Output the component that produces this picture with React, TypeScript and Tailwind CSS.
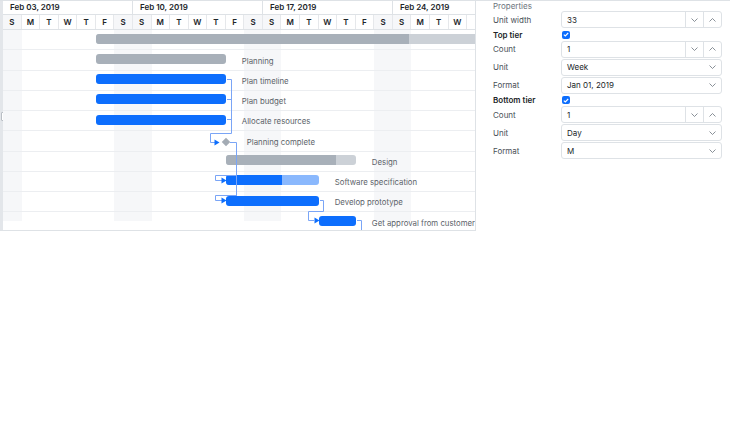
import type { ReactNode } from 'react'

const DAY = 130 / 7
const ROW_H = 20.25
const dayNames = ['S', 'M', 'T', 'W', 'T', 'F', 'S']
const weeks = ['Feb 03, 2019', 'Feb 10, 2019', 'Feb 17, 2019', 'Feb 24, 2019']

type GanttRow =
  | { kind: 'bar'; start: number; span: number; progress: number; tone: 'blue' | 'gray'; label: string }
  | { kind: 'milestone'; start: number; label: string }

const rows: GanttRow[] = [
  { kind: 'bar', start: 5, span: 24, progress: 313 / (24 * DAY), tone: 'gray', label: '' },
  { kind: 'bar', start: 5, span: 7, progress: 1, tone: 'gray', label: 'Planning' },
  { kind: 'bar', start: 5, span: 7, progress: 1, tone: 'blue', label: 'Plan timeline' },
  { kind: 'bar', start: 5, span: 7, progress: 1, tone: 'blue', label: 'Plan budget' },
  { kind: 'bar', start: 5, span: 7, progress: 1, tone: 'blue', label: 'Allocate resources' },
  { kind: 'milestone', start: 12, label: 'Planning complete' },
  { kind: 'bar', start: 12, span: 7, progress: 0.85, tone: 'gray', label: 'Design' },
  { kind: 'bar', start: 12, span: 5, progress: 0.6, tone: 'blue', label: 'Software specification' },
  { kind: 'bar', start: 12, span: 5, progress: 1, tone: 'blue', label: 'Develop prototype' },
  { kind: 'bar', start: 17, span: 2, progress: 1, tone: 'blue', label: 'Get approval from customer' },
]

function TaskBar({ row }: { row: GanttRow }) {
  if (row.kind === 'milestone') {
    const center = row.start * DAY
    return (
      <>
        <div
          className="absolute top-[7.75px] h-[6px] w-[6px] rotate-45 bg-[#a3abb4]"
          style={{ left: center - 3 }}
        />
        <div
          className="absolute bottom-0 top-[3px] flex items-center whitespace-nowrap text-[#5c636a]"
          style={{ left: center + 21 }}
        >
          {row.label}
        </div>
      </>
    )
  }

  const left = row.start * DAY
  const width = row.span * DAY
  const isBlue = row.tone === 'blue'

  return (
    <>
      <div
        className={`absolute top-[3.5px] h-[10px] overflow-hidden rounded-[3px] ${isBlue ? 'bg-[#8ab8fd]' : 'bg-[#ccd1d7]'}`}
        style={{ left, width }}
      >
        <div
          className={`h-full ${isBlue ? 'bg-[#0d6efd]' : 'bg-[#a8b0b9]'}`}
          style={{ width: `${row.progress * 100}%` }}
        />
      </div>
      {row.label ? (
        <div
          className="absolute bottom-0 top-[3px] flex items-center whitespace-nowrap text-[#5c636a]"
          style={{ left: left + width + 16 }}
        >
          {row.label}
        </div>
      ) : null}
    </>
  )
}

function Connectors() {
  return (
    <svg className="pointer-events-none absolute left-0 top-[-1px]" width="476" height="232" viewBox="0 0 476 232">
      <g fill="none" stroke="#7aa5f6" strokeWidth="1">
        <path d="M227 79.5H231.5V133.5H210.5V142.5H215" />
        <path d="M227 99.5H231.5" />
        <path d="M227 119.5H231.5" />
        <path d="M230 142.5H236.5V196" />
        <path d="M236.5 175.5H215.5V180.5H222" />
        <path d="M236.5 195.5H215.5V200.5H222" />
        <path d="M320 200.5H323.5V211.5H308.5V220.5H314" />
        <path d="M357 220.5H361.5V232" />
      </g>
      <g fill="#0d6efd">
        <polygon points="214.5,139.5 219.5,142.5 214.5,145.5" />
        <polygon points="221.5,177.5 226.5,180.5 221.5,183.5" />
        <polygon points="221.5,197.5 226.5,200.5 221.5,203.5" />
        <polygon points="314.5,217.5 319.5,220.5 314.5,223.5" />
      </g>
    </svg>
  )
}

function Gantt() {
  const days = weeks
    .flatMap((_, w) => dayNames.map((d, i) => ({ key: `${w}-${i}`, name: d, weekend: i === 0 || i === 6 })))
    .slice(0, 25)

  return (
    <div className="relative flex h-[231px] w-[476px] shrink-0 overflow-hidden border-b border-r border-t border-[#dee2e6]">
      <div className="relative w-[3px] shrink-0 bg-[#e3e6ea]">
        <div className="absolute left-[1px] top-[111px] h-[9px] w-[3px] rounded-[1px] border border-[#b9bec5] bg-white" />
      </div>
      <div className="relative flex-1 overflow-hidden">
        <div className="w-[530px]">
          <div className="flex h-[14px] border-b border-[#dee2e6]">
            {weeks.map((w) => (
              <div key={w} className="w-[130px] shrink-0 border-r border-[#dee2e6] pl-[7px] text-[8px] font-semibold leading-[13px] text-[#212529]">
                {w}
              </div>
            ))}
          </div>
          <div className="flex h-[15px] border-b border-[#dee2e6]">
            {days.map((d) => (
              <div
                key={d.key}
                className={`flex w-[18.5714px] shrink-0 items-center justify-center border-r border-[#e6e8eb] text-[8px] font-semibold text-[#212529] ${d.weekend ? 'bg-[#f6f7f9]' : ''}`}
              >
                {d.name}
              </div>
            ))}
          </div>
          <div className="relative h-[202px]">
            <div className="absolute inset-x-0 top-0 flex h-[191px]">
              {days.map((d) => (
                <div key={d.key} className={`w-[18.5714px] shrink-0 ${d.weekend ? 'bg-[#f6f7f9]' : ''}`} />
              ))}
            </div>
            {rows.map((row, i) => (
              <div key={i} className="relative border-b border-[#eceef1] text-[7.8px]" style={{ height: ROW_H }}>
                <TaskBar row={row} />
              </div>
            ))}
          </div>
        </div>
      </div>
      <Connectors />
    </div>
  )
}

function Chevron({ up = false }: { up?: boolean }) {
  return (
    <svg width="7" height="4" viewBox="0 0 7 4" fill="none" stroke="#6c757d" strokeWidth="0.8">
      {up ? <polyline points="0.5,3.5 3.5,0.5 6.5,3.5" /> : <polyline points="0.5,0.5 3.5,3.5 6.5,0.5" />}
    </svg>
  )
}

function Field({ label, children }: { label: string; children: ReactNode }) {
  return (
    <div className="flex h-[18px] items-start">
      <div className="flex h-[17px] w-[68px] shrink-0 items-center whitespace-nowrap">{label}</div>
      <div className="flex-1">{children}</div>
    </div>
  )
}

function NumberBox({ value }: { value: string }) {
  return (
    <div className="flex h-[17px] items-stretch rounded-[3px] border border-[#dee2e6] bg-white text-[#212529]">
      <div className="flex flex-1 items-center pl-[5px]">{value}</div>
      <div className="flex w-[18px] items-center justify-center border-l border-[#dee2e6]">
        <Chevron />
      </div>
      <div className="flex w-[18px] items-center justify-center border-l border-[#dee2e6]">
        <Chevron up />
      </div>
    </div>
  )
}

function SelectBox({ value }: { value: string }) {
  return (
    <div className="flex h-[17px] items-center rounded-[3px] border border-[#dee2e6] bg-white pl-[5px] pr-[5px] text-[#212529]">
      <div className="flex-1">{value}</div>
      <Chevron />
    </div>
  )
}

function CheckRow({ label }: { label: string }) {
  return (
    <div className="flex h-[11.5px] items-center">
      <div className="w-[68px] shrink-0 font-semibold text-[#212529]">{label}</div>
      <div className="ml-[1px] flex h-[8px] w-[8px] items-center justify-center rounded-[2px] bg-[#0d6efd]">
        <svg width="6" height="5" viewBox="0 0 6 5" fill="none" stroke="white" strokeWidth="1.1">
          <polyline points="0.8,2.6 2.3,4 5.2,1" />
        </svg>
      </div>
    </div>
  )
}

function PropertiesPanel() {
  return (
    <div className="flex-1 border-t border-[#dee2e6] pl-[17px] pr-[8px] text-[8px] text-[#495057]">
      <div className="h-[10px] pt-px leading-[9px] text-[#6c757d]">Properties</div>
      <Field label="Unit width">
        <NumberBox value="33" />
      </Field>
      <CheckRow label="Top tier" />
      <Field label="Count">
        <NumberBox value="1" />
      </Field>
      <Field label="Unit">
        <SelectBox value="Week" />
      </Field>
      <Field label="Format">
        <SelectBox value="Jan 01, 2019" />
      </Field>
      <CheckRow label="Bottom tier" />
      <Field label="Count">
        <NumberBox value="1" />
      </Field>
      <Field label="Unit">
        <SelectBox value="Day" />
      </Field>
      <Field label="Format">
        <SelectBox value="M" />
      </Field>
    </div>
  )
}

export default function App() {
  return (
    <div className="flex h-[421px] w-[730px] items-start bg-white font-['Inter',sans-serif]">
      <Gantt />
      <PropertiesPanel />
    </div>
  )
}
